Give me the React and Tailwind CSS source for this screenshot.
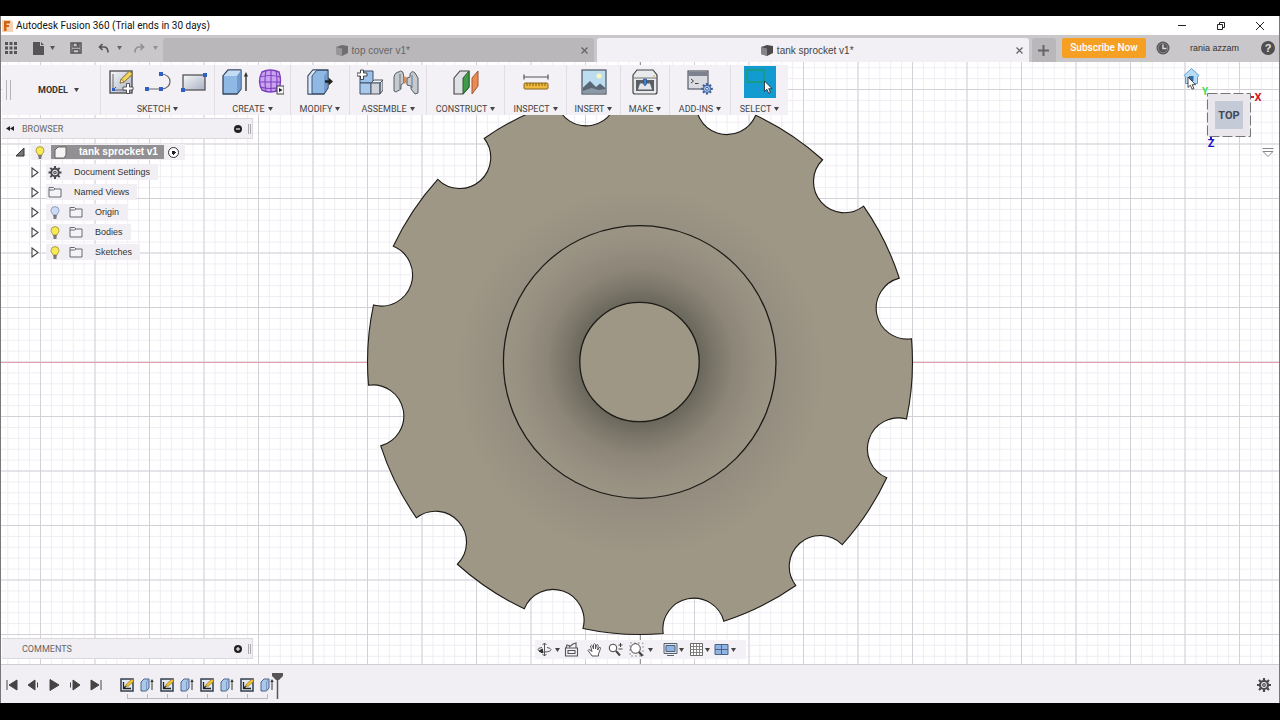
import React, { useState } from 'react'

const TOOTH_COUNT = 12
const OUTER_R = 272.5
const NOTCH_R = 31
const NOTCH_HALF = 6.52

// Outline of the sprocket: outer arcs joined by round notches that cut inwards
function sprocketPath(cx, cy) {
  const point = deg => {
    const a = (deg * Math.PI) / 180
    return `${(cx + OUTER_R * Math.cos(a)).toFixed(2)} ${(cy + OUTER_R * Math.sin(a)).toFixed(2)}`
  }
  let d = ''
  for (let i = 0; i < TOOTH_COUNT; i++) {
    const mid = 18.6 + i * 30
    d += `${i === 0 ? 'M' : `A${OUTER_R} ${OUTER_R} 0 0 1 `}${point(mid - NOTCH_HALF)}`
    d += `A${NOTCH_R} ${NOTCH_R} 0 0 0 ${point(mid + NOTCH_HALF)}`
  }
  return `${d}A${OUTER_R} ${OUTER_R} 0 0 1 ${point(18.6 - NOTCH_HALF)}Z`
}

function Caret({ className = 'text-[#444]' }) {
  return (
    <svg className={`w-[5px] h-1 shrink-0 ${className}`} viewBox="0 0 5 4" fill="currentColor">
      <path d="M0 0h5L2.5 4z" />
    </svg>
  )
}

function Pointer({ x, y }) {
  return (
    <path
      transform={`translate(${x} ${y})`}
      d="M0 0v10.5l2.4-2.2 1.7 3.9 1.8-.8-1.7-3.7h3.3z"
      fill="#fff"
      stroke="#222"
      strokeWidth=".8"
    />
  )
}

function Icon({ children, className = 'w-[26px] h-[26px]', box = 26 }) {
  return (
    <svg className={`shrink-0 ${className}`} viewBox={`0 0 ${box} ${box}`} fill="none">
      {children}
    </svg>
  )
}

const CreateSketchIcon = () => (
  <Icon>
    <rect x="1" y="2" width="22" height="22" fill="url(#steel)" stroke="#555" strokeWidth="1.4" />
    <path d="M4 5v16h14" stroke="#666" />
    <path d="M4 21l3-3" stroke="#444" />
    <rect x="3" y="19" width="3" height="3" fill="#2f5fc4" />
    <path d="M11 14l1.3-4L20.5 2l3.2 3-8.5 8z" fill="#f4d35a" stroke="#6b5a1c" strokeWidth=".9" />
    <path d="M11 14l1.3-4 2.9 3z" fill="#fbe9c4" stroke="#6b5a1c" strokeWidth=".6" />
    <path d="M17.5 14.5h3V18H24v3h-3.5v3.5h-3V21H14v-3h3.5z" fill="#fff" stroke="#444" strokeWidth=".9" />
  </Icon>
)

const LineIcon = () => (
  <Icon>
    <path d="M2 20h14M16 5c12 0 12 15 0 15" stroke="#666" strokeWidth="1.2" />
    <rect x="0" y="18" width="4" height="4" fill="#2f5fc4" />
    <rect x="14" y="18" width="4" height="4" fill="#2f5fc4" />
    <rect x="14" y="3" width="4" height="4" fill="#2f5fc4" />
  </Icon>
)

const RectIcon = () => (
  <Icon>
    <rect x="2" y="6" width="22" height="15" fill="url(#steel)" stroke="#555" strokeWidth="1.3" />
    <rect x="0" y="19" width="4" height="4" fill="#2f5fc4" />
    <rect x="22" y="4" width="4" height="4" fill="#2f5fc4" />
  </Icon>
)

const ExtrudeIcon = ({ className }) => (
  <Icon className={className}>
    <path d="M1 7l5-6h13v19l-4 5H1z" fill="#8fb8e4" stroke="#34465f" strokeWidth="1.3" strokeLinejoin="round" />
    <path d="M1.5 7l5-5.5H19L15 7z" fill="#c4dcf4" />
    <path d="M15 7l3.8-5v18L15 24.5z" fill="#6f9ccd" />
    <path d="M24 22V6" stroke="#333" strokeWidth="1.4" />
    <path d="M21.8 7.5L24 3l2 4.5z" fill="#333" />
  </Icon>
)

const FormIcon = () => (
  <Icon>
    <path d="M4 3q8-4 17 0 3 8 0 18-9 4-17 0Q-1 12 4 3z" fill="#c9a2f0" stroke="#7d3fc0" strokeWidth="1.4" />
    <path d="M2 8q10-3 20 0M1 13h22M2 18q10 3 20 0M8 1.5q-2 10 0 21M13 1v22M18 1.5q2 10 0 21" stroke="#7d3fc0" strokeWidth="1.1" />
    <rect x="19" y="17" width="7" height="8" fill="#f3f3f3" stroke="#444" />
    <path d="M21 19l3.5 2-3.5 2z" fill="#222" />
  </Icon>
)

const PressPullIcon = () => (
  <Icon>
    <path d="M1 7l5-6h15v18l-4 6H1z" fill="#8fb8e4" stroke="#34465f" strokeWidth="1.3" strokeLinejoin="round" />
    <path d="M1.5 7L6 1.5h3.5L5 7v17.5H1.5z" fill="#dbe7f4" />
    <path d="M5 25V7l4.500-5.500" stroke="#34465f" strokeWidth=".9" />
    <path d="M17 7l3.500-5v17L17 24z" fill="#6f9ccd" />
    <path d="M18 12.500h4" stroke="#222" strokeWidth="2.500" />
    <path d="M21.500 8.500L26 12.500l-4.500 4z" fill="#222" />
  </Icon>
)

const ComponentIcon = () => (
  <Icon>
    <path d="M3 4l3-2h10v12H3z" fill="#9cc1ea" stroke="#3f506a" />
    <path d="M3 14h11v11H3z" fill="#a9c9ec" stroke="#3f506a" />
    <path d="M14 14l3-3h9l-3 3z" fill="#f4f5f7" stroke="#4d5560" />
    <path d="M14 14h9v11h-9zM23 14l3-3v10l-3 4z" fill="#cfd4dc" stroke="#4d5560" />
    <path d="M3.500 1h3v3H10v3H6.500v3.500h-3V7H0V4h3.500z" fill="#fff" stroke="#333" strokeWidth=".9" />
  </Icon>
)

const JointIcon = () => (
  <Icon>
    <path d="M1 8q1-5 5-5l1.500-1q3 0 3 4v8L8 16v4l-5 3-2-1z" fill="#c5cad1" stroke="#555d67" />
    <path d="M7 5v15" stroke="#555d67" strokeWidth=".8" />
    <path d="M10.500 7l3 1v6l-3 1z" fill="#e58a4a" />
    <path d="M14 9l3-1V5q2-4 5-1l3 5v15l-3 1-4-5v-3l-4-1z" fill="#c5cad1" stroke="#555d67" />
    <path d="M19 6v13" stroke="#555d67" strokeWidth=".8" />
  </Icon>
)

const PlaneIcon = () => (
  <Icon>
    <path d="M1 9l6-7h9v16l-6 7H1z" fill="#dfe1e4" stroke="#444" strokeWidth="1.100" />
    <path d="M10 9l6-7v16l-6 7z" fill="#3f9b46" stroke="#2d5f31" />
    <path d="M19 9l6-7v15l-6 8z" fill="#ee8a50" stroke="#9a5a34" />
  </Icon>
)

const MeasureIcon = () => (
  <Icon>
    <path d="M1 8h24M1 5.500v5M25 5.500v5" stroke="#555" strokeWidth="1.200" />
    <rect x="1" y="14" width="24" height="6" rx="1" fill="#f0b83c" stroke="#8a681e" />
    <path d="M4 14v3M7 14v3M10 14v3M13 14v3M16 14v3M19 14v3M22 14v3" stroke="#6e5215" strokeWidth=".8" />
  </Icon>
)

const PictureIcon = () => (
  <Icon>
    <rect x="1" y="1" width="24" height="24" fill="#bcdcf0" stroke="#4d5560" strokeWidth="1.200" />
    <circle cx="18" cy="7" r="2.500" fill="#fdf6b8" />
    <path d="M1.600 19L9 12l6 6 4-3.500 5.400 4.500v5.400H1.600z" fill="#5b6675" />
    <path d="M1.600 22l9-3 7 2 6.800-1v4.400H1.600z" fill="#8d98a6" />
  </Icon>
)

const PrinterIcon = () => (
  <Icon>
    <path d="M1 6l4-5h16l4 5v17q0 2-2 2H3q-2 0-2-2z" fill="#e9eaec" stroke="#444" strokeWidth="1.200" />
    <path d="M1 9h24" stroke="#777" />
    <circle cx="22" cy="7" r=".8" fill="#e2a63a" />
    <rect x="4" y="11" width="18" height="11" fill="#5a5f66" />
    <path d="M6 20.500l2-6h10l2 6z" fill="#e3e7ec" />
    <path d="M11.500 10h3v5L13 17l-1.500-2z" fill="#3f7fd0" stroke="#1f4b86" strokeWidth=".6" />
  </Icon>
)

const AddInsIcon = () => (
  <Icon>
    <rect x="1" y="2" width="20" height="18" fill="#d9dbe0" stroke="#555c66" strokeWidth="1.200" />
    <path d="M1 3h20v4H1z" fill="#7b828d" />
    <path d="M4 10l2.500 2L4 14M8 14.500h3.500" stroke="#444" />
    <g stroke="#40639c">
      <path d="M20 14v11.500M14.300 19.800h11.500M16 15.700l8 8M24 15.700l-8 8" strokeWidth="2.200" />
      <circle cx="20" cy="19.800" r="3.600" fill="#a8c2ea" />
      <circle cx="20" cy="19.800" r="1.400" fill="#fff" />
    </g>
  </Icon>
)

const SelectIcon = () => (
  <Icon className="w-8 h-8" box={32}>
    <path d="M0 0h32v32H0z" fill="#119bd0" />
    <rect x="3" y="4" width="17" height="12" stroke="#239a63" strokeWidth="1.300" />
    <Pointer x={20.5} y={15} />
  </Icon>
)

const ribbon = [
  { label: 'SKETCH', width: 'w-[114px]', icons: [CreateSketchIcon, LineIcon, RectIcon] },
  { label: 'CREATE', width: 'w-[76px]', icons: [ExtrudeIcon, FormIcon] },
  { label: 'MODIFY', width: 'w-[59px]', icons: [PressPullIcon] },
  { label: 'ASSEMBLE', width: 'w-[77px]', icons: [ComponentIcon, JointIcon] },
  { label: 'CONSTRUCT', width: 'w-[78px]', icons: [PlaneIcon] },
  { label: 'INSPECT', width: 'w-[62px]', icons: [MeasureIcon] },
  { label: 'INSERT', width: 'w-[54px]', icons: [PictureIcon] },
  { label: 'MAKE', width: 'w-[49px]', icons: [PrinterIcon] },
  { label: 'ADD-INS', width: 'w-[61px]', icons: [AddInsIcon] },
  { label: 'SELECT', width: 'w-[58px]', icons: [SelectIcon] },
]

function GearIcon({ className }) {
  return (
    <svg className={`shrink-0 ${className}`} viewBox="0 0 14 14" fill="none" stroke="#4a4a4d">
      <path d="M7 0v14M0 7h14M2 2l10 10M12 2L2 12" strokeWidth="2.200" />
      <circle cx="7" cy="7" r="4" fill="#f1eff3" strokeWidth="2.200" />
      <circle cx="7" cy="7" r="1.300" strokeWidth="1.200" />
    </svg>
  )
}

function FolderIcon() {
  return (
    <svg className="w-[14px] h-3 shrink-0" viewBox="0 0 14 12" fill="#f4f4f7" stroke="#666a72">
      <path d="M1 11V1.500h4.500L7 3h6v8z" />
      <path d="M1 4h4.500L7 3" />
    </svg>
  )
}

function BulbIcon({ on = true }) {
  return (
    <svg className="w-[10px] h-[13px] shrink-0" viewBox="0 0 10 13">
      <path
        d="M5 .6a4 4 0 0 0-4 4c0 2 1.800 2.800 2 4.400h4c.2-1.600 2-2.400 2-4.400a4 4 0 0 0-4-4z"
        fill={on ? '#f7ea56' : '#ccdcf6'}
        stroke={on ? '#a6973a' : '#8797b8'}
        strokeWidth=".9"
      />
      <path d="M3.300 10h3.400M3.500 12h3" stroke="#555" strokeWidth="1.300" />
    </svg>
  )
}

function ExpandArrow() {
  return (
    <svg className="w-2 h-[11px] shrink-0" viewBox="0 0 8 11" fill="#fff" stroke="#444" strokeWidth="1.100">
      <path d="M1 1l6 4.500L1 10z" />
    </svg>
  )
}

function CubeIcon({ dark, light }) {
  return (
    <svg className="w-[14px] h-[13px] shrink-0" viewBox="0 0 14 13">
      <path d="M1 3l6-2 6 1v7l-6 3-6-2z" fill={dark} />
      <path d="M1 3l6 1.500V12L1 10z" fill={light} />
    </svg>
  )
}

function TitleBar() {
  return (
    <header className="h-[19px] bg-white flex items-center pl-px">
      <svg className="w-3 h-3 shrink-0" viewBox="0 0 12 12">
        <path d="M0 0h9l2 2v10H0z" fill="#f6d3b4" />
        <path d="M2 1h6v2.500H4.500V5H7v2H4.500v4H2z" fill="#cf6414" />
      </svg>
      <h1 className="ml-[2px] text-[10px] leading-4 text-[#111] font-[Roboto,sans-serif]">
        Autodesk Fusion 360 (Trial ends in 30 days)
      </h1>
      <div className="ml-auto flex items-center gap-[29px] pr-[14px] text-[#222]">
        <button aria-label="Minimize">
          <svg className="w-[10px] h-[10px]" viewBox="0 0 10 10" stroke="currentColor"><path d="M1 4.500h8" /></svg>
        </button>
        <button aria-label="Restore">
          <svg className="w-[10px] h-[10px]" viewBox="0 0 10 10" fill="none" stroke="currentColor">
            <path d="M1.500 3.500h5v5h-5zM3.500 3V1.500h5v5H7" />
          </svg>
        </button>
        <button aria-label="Close">
          <svg className="w-[10px] h-[10px]" viewBox="0 0 10 10" stroke="currentColor"><path d="M1 1l8 8M9 1L1 9" /></svg>
        </button>
      </div>
    </header>
  )
}

function DocTab({ name, active, onClick }) {
  return (
    <div className={`flex-1 h-6 flex items-center rounded-t-[3px] pt-px pr-[6px] ${active ? 'bg-[#f2f0f4] text-[#444]' : 'bg-[#b9b7b9] text-[#666]'}`}>
      <button onClick={onClick} className="flex-1 flex items-center justify-center gap-[3px] text-[10px] leading-4">
        {active ? <CubeIcon dark="#4c4a4c" light="#858386" /> : <CubeIcon dark="#6f6d70" light="#989699" />}
        {name}
      </button>
      <button aria-label={`Close ${name}`} className="text-[#666]">
        <svg className="w-[7px] h-[7px]" viewBox="0 0 7 7" stroke="currentColor" strokeWidth="1.300"><path d="M.5.5l6 6M6.500.5l-6 6" /></svg>
      </button>
    </div>
  )
}

function TabBar() {
  const [tab, setTab] = useState(1)
  return (
    <nav className="h-[27px] bg-[#c9c7ca] flex items-end text-[#555]">
      <div className="w-[162px] h-6 shrink-0 flex items-center pl-[4px] pb-1">
        <button aria-label="Data panel">
          <svg className="w-3 h-3" viewBox="0 0 12 12" fill="currentColor">
            <path d="M0 0h3v3H0zM4.500 0h3v3h-3zM9 0h3v3H9zM0 4.500h3v3H0zM4.500 4.500h3v3h-3zM9 4.500h3v3H9zM0 9h3v3H0zM4.500 9h3v3h-3zM9 9h3v3H9z" />
          </svg>
        </button>
        <button aria-label="File" className="ml-4 flex items-center gap-[5px]">
          <svg className="w-3 h-[13px]" viewBox="0 0 12 13" fill="currentColor"><path d="M0 0h7v4h4v9H0zM8 0l3 3H8z" /></svg>
          <Caret className="text-[#555]" />
        </button>
        <button aria-label="Save" className="ml-[15px]">
          <svg className="w-3 h-3" viewBox="0 0 12 12" fill="none" stroke="currentColor" strokeWidth="1.500">
            <path d="M1 1h10v10H1zM3 1v4h6V1M3 11V7.500h6V11" />
            <path d="M6.500 2h1v2" />
          </svg>
        </button>
        <button aria-label="Undo" className="ml-4 flex items-center gap-2">
          <svg className="w-[11px] h-[10px]" viewBox="0 0 11 10" fill="none" stroke="currentColor" strokeWidth="1.700">
            <path d="M2 4h4.500Q10 4.500 10 9.500M4.500 1L1.500 4l3 3" />
          </svg>
          <Caret className="text-[#666]" />
        </button>
        <button aria-label="Redo" className="ml-3 flex items-center gap-2 text-[#929092]">
          <svg className="w-[11px] h-[10px]" viewBox="0 0 11 10" fill="none" stroke="currentColor" strokeWidth="1.700">
            <path d="M9 4H4.500Q1 4.500 1 9.500M6.500 1l3 3-3 3" />
          </svg>
          <Caret className="text-[#929092]" />
        </button>
      </div>
      <div className="flex-1 flex gap-[3px]">
        <DocTab name="top cover v1*" active={tab === 0} onClick={() => setTab(0)} />
        <DocTab name="tank sprocket v1*" active={tab === 1} onClick={() => setTab(1)} />
      </div>
      <button aria-label="New design" className="ml-[3px] w-6 h-6 bg-[#b9b7b9] rounded-t-[3px] flex items-center justify-center text-[#666]">
        <svg className="w-[11px] h-[11px]" viewBox="0 0 11 11" stroke="currentColor" strokeWidth="2"><path d="M5.500 0v11M0 5.500h11" /></svg>
      </button>
      <div className="h-6 flex items-center pl-[6px] pb-1 pr-[4px]">
        <button className="w-[84px] h-5 rounded-[2px] bg-[#f5a023] text-white text-[10px] leading-5 font-medium font-[Roboto,sans-serif]">
          Subscribe Now
        </button>
        <button aria-label="Job status" className="ml-[10px]">
          <svg className="w-[14px] h-[14px]" viewBox="0 0 14 14">
            <circle cx="7" cy="7" r="6.500" fill="#555" />
            <circle cx="7" cy="7" r="4.800" fill="#555" stroke="#aaa" strokeWidth=".6" />
            <path d="M7 3.500V7.500h3.500" fill="none" stroke="#ddd" strokeWidth="1.400" />
          </svg>
        </button>
        <button className="ml-5 text-[9px] leading-4 text-[#333]">rania azzam</button>
        <button aria-label="Help" className="ml-[22px] w-[14px] h-[14px] rounded-full bg-[#4f4f52] text-[#e4e2e5] text-[11px] leading-[14px] font-bold">?</button>
      </div>
    </nav>
  )
}

function Ribbon() {
  return (
    <div className="self-start ml-px h-[50px] flex items-center bg-[#f3f1f5] font-[Roboto,sans-serif] text-[9px] leading-3 text-[#444]">
      <div className="w-[98px] flex items-center">
        <div className="ml-[4px] w-[5px] h-5 border-x border-[#b5b3b8]" />
        <button className="ml-[27px] flex items-center gap-[6px] font-bold text-[#333]">
          MODEL <Caret />
        </button>
      </div>
      {ribbon.map(group => (
        <div key={group.label} className={`${group.width} h-[50px] flex flex-col items-center justify-end border-l border-[#e0dee3]`}>
          <div className="h-8 flex items-center gap-[10px]">
            {group.icons.map((GroupIcon, i) => (
              <button key={i} aria-label={`${group.label} tool ${i + 1}`}><GroupIcon /></button>
            ))}
          </div>
          <button className="mt-[5px] flex items-center gap-[3px] whitespace-nowrap">
            {group.label} <Caret />
          </button>
        </div>
      ))}
    </div>
  )
}

function PanelHeader({ title, collapsible, sign }) {
  return (
    <div className="ml-px w-[251px] h-[21px] flex items-center bg-[#f1eff3] border border-l-0 border-[#dad8dd] font-[Roboto,sans-serif] text-[9px] leading-3 text-[#666]">
      <div className="w-5 pl-1">
        {collapsible && (
          <button aria-label="Collapse panel" className="block">
            <svg className="w-2 h-[5px]" viewBox="0 0 8 5" fill="#222"><path d="M4 0v5L0 2.500zM8 0v5L4 2.500z" /></svg>
          </button>
        )}
      </div>
      <h2>{title}</h2>
      <button aria-label={`Toggle ${title}`} className="ml-auto">
        <svg className="w-2 h-2" viewBox="0 0 8 8">
          <circle cx="4" cy="4" r="4" fill="#222" />
          <path d={sign === 'minus' ? 'M2 4h4' : 'M2 4h4M4 2v4'} stroke="#fff" strokeWidth="1.100" />
        </svg>
      </button>
      <div className="ml-[6px] mr-px w-[3px] h-[10px] border-x border-[#aaa8ad]" />
    </div>
  )
}

const treeItems = [
  { label: 'Document Settings', icon: 'gear' },
  { label: 'Named Views', icon: 'folder' },
  { label: 'Origin', icon: 'folder', bulb: 'off' },
  { label: 'Bodies', icon: 'folder', bulb: 'on' },
  { label: 'Sketches', icon: 'folder', bulb: 'on' },
]

function BrowserTree() {
  return (
    <ul className="mt-[3px] text-[9px] text-[#333]">
      <li className="h-5 flex items-center pl-[14px]">
        <button aria-label="Collapse tank sprocket v1">
          <svg className="w-[10px] h-[10px]" viewBox="0 0 10 10" fill="#777" stroke="#333"><path d="M9 1v8H1z" /></svg>
        </button>
        <div className="ml-[6px] h-4 flex items-center bg-[#f1eff3] px-1">
          <BulbIcon />
          <button className="ml-[6px] h-[14px] flex items-center gap-3 bg-[#929092] px-[3px] text-[10px] leading-[14px] font-bold text-white">
            <svg className="w-[13px] h-[13px] shrink-0" viewBox="0 0 13 13" fill="#f4f4f4" stroke="#666">
              <path d="M1 4l3-3h8v8l-2 3H1z" />
            </svg>
            <span className="pr-[3px]">tank sprocket v1</span>
          </button>
          <label className="ml-1 flex items-center">
            <input
              type="radio"
              aria-label="Activate tank sprocket v1"
              defaultChecked
              className="appearance-none w-[11px] h-[11px] rounded-full border border-[#333] bg-white bg-[radial-gradient(circle,#222_0_2px,transparent_2px)]"
            />
          </label>
          <span className="w-[2px]" />
        </div>
      </li>
      {treeItems.map(item => (
        <li key={item.label} className="h-5 flex items-center pl-[30px]">
          <button aria-label={`Expand ${item.label}`}><ExpandArrow /></button>
          <div className="ml-[7px] h-4 flex items-center bg-[#f1eff3] pl-[2px] pr-2">
            {item.bulb && <span className="w-[21px] pl-[2px]"><BulbIcon on={item.bulb === 'on'} /></span>}
            {item.icon === 'gear' ? <GearIcon className="w-[14px] h-[13px]" /> : <FolderIcon />}
            <span className="ml-3 leading-4">{item.label}</span>
          </div>
        </li>
      ))}
    </ul>
  )
}

function NavBar() {
  const s = 'w-[15px] h-[15px]'
  return (
    <div className="h-[19px] flex items-center bg-[#f3f1f5] px-[2px] gap-[2px]">
      <button aria-label="Orbit" className="flex items-center gap-[3px]">
        <svg className={s} viewBox="0 0 15 15" fill="none" stroke="#555">
          <path d="M7.500 1v13M5.500 3l2-2 2 2M5.500 12l2 2 2-2" />
          <path d="M5 5.500Q1 6 1 7.500 1.500 10 7.500 10t6.500-2.500Q13.500 6 10 5.500" />
          <path d="M2 9l3.500-2v4z" fill="#333" stroke="#333" />
        </svg>
        <Caret />
      </button>
      <button aria-label="Look at" className="ml-[2px]">
        <svg className={s} viewBox="0 0 15 15" fill="none" stroke="#555" strokeWidth="1.100">
          <path d="M1.500 6h12v8h-12zM4 8.500h7v3H4zM2 6l1-3 3 1M5 5l4-3 3-1v5" />
        </svg>
      </button>
      <button aria-label="Pan" className="ml-[6px]">
        <svg className={s} viewBox="0 0 15 15" fill="#fff" stroke="#555">
          <path d="M5 14Q3 11 1 8.500q.5-1.500 2-.5l2 1.500L3.500 4Q4.500 2.500 5.500 4l1 3V2.500Q7.500 1 8.500 2.500V7l1-4q1.500-1 1.700.5L10.700 8l1.500-2.500q1.500-.5 1.300 1L11.500 12v2z" />
        </svg>
      </button>
      <button aria-label="Zoom" className="ml-1">
        <svg className={s} viewBox="0 0 15 15" fill="#fff" stroke="#444">
          <circle cx="5" cy="6" r="3.800" />
          <path d="M8 9l4 4.500" strokeWidth="2" />
          <path d="M12.500 1v4M10.500 3h4M10.500 7h4" />
        </svg>
      </button>
      <button aria-label="Fit" className="ml-1 flex items-center gap-1">
        <svg className={s} viewBox="0 0 15 15" fill="#fff" stroke="#444">
          <path d="M1 1h13v13H1z" fill="none" strokeDasharray="2 2" stroke="#999" />
          <circle cx="6.500" cy="6.500" r="4.800" />
          <path d="M10 10l3.500 4" strokeWidth="2.200" />
        </svg>
        <Caret />
      </button>
      <button aria-label="Display settings" className="ml-2 flex items-center gap-px">
        <svg className={s} viewBox="0 0 15 15" fill="#dde3ee" stroke="#56606f">
          <path d="M1 1.500h13v10H1zM4 13.500h7" />
          <path d="M3 3.500h9v6H3z" fill="#8db4e6" />
        </svg>
        <Caret />
      </button>
      <button aria-label="Grid settings" className="ml-[3px] flex items-center gap-px">
        <svg className={s} viewBox="0 0 15 15" fill="#fff" stroke="#777" strokeWidth=".9">
          <path d="M1.500 1.500h12v12h-12z" stroke="#555" />
          <path d="M4.500 1v13M7.500 1v13M10.500 1v13M1 4.500h13M1 7.500h13M1 10.500h13" />
        </svg>
        <Caret />
      </button>
      <button aria-label="Viewports" className="ml-[2px] flex items-center gap-[2px]">
        <svg className={s} viewBox="0 0 15 15" fill="#8fb4e4" stroke="#4c6384">
          <path d="M1 2.500h13v10H1zM7.500 2.500v10M1 7.500h13" />
        </svg>
        <Caret />
      </button>
      <span className="w-[6px]" />
    </div>
  )
}

function ModelCanvas() {
  return (
    <svg className="absolute inset-0 w-full h-full" viewBox="0 62 1280 602" preserveAspectRatio="xMidYMid slice">
      <defs>
        <linearGradient id="steel" x1="0" y1="0" x2="1" y2="1">
          <stop offset="0" stopColor="#f6f7fa" />
          <stop offset="1" stopColor="#aab1c2" />
        </linearGradient>
        <pattern id="minor" x="40" y="34.500" width="10.900" height="10.900" patternUnits="userSpaceOnUse">
          <path d="M0 .5h10.900M.5 0v10.900" stroke="#efedf3" fill="none" />
        </pattern>
        <pattern id="major" x="40" y="34.500" width="54.500" height="54.500" patternUnits="userSpaceOnUse">
          <path d="M0 .5h54.500M.5 0v54.500" stroke="#d3d1d7" fill="none" />
        </pattern>
        <radialGradient id="hub" cx="640" cy="362" r="137" gradientUnits="userSpaceOnUse">
          <stop offset=".43" stopColor="#69665b" />
          <stop offset=".54" stopColor="#797568" />
          <stop offset=".68" stopColor="#8c8578" />
          <stop offset=".84" stopColor="#968e80" />
          <stop offset="1" stopColor="#9c9585" />
        </radialGradient>
        <radialGradient id="plate" cx="640" cy="372" r="185" gradientUnits="userSpaceOnUse">
          <stop offset=".7" stopColor="#948c7f" />
          <stop offset="1" stopColor="#9e9786" />
        </radialGradient>
      </defs>
      <path d="M0 62h1280v602H0z" fill="#fff" />
      <path d="M0 62h1280v602H0z" fill="url(#minor)" />
      <path d="M0 62h1280v602H0z" fill="url(#major)" />
      <path d="M640.500 62v602" stroke="#99979c" />
      <path d="M0 362.500h1280" stroke="#e3a0aa" />
      <path d={sprocketPath(640, 362)} fill="url(#plate)" stroke="#1d1b17" strokeWidth="1.100" />
      <circle cx="639.700" cy="362" r="136.300" fill="url(#hub)" stroke="#1d1b17" strokeWidth="1.300" />
      <circle cx="639.500" cy="362" r="59.700" fill="#9e9786" stroke="#1d1b17" strokeWidth="1.300" />
    </svg>
  )
}

// View orientation widget that floats in the canvas corner
function ViewCube() {
  return (
    <div className="absolute top-0 right-0 w-24 h-24">
      <svg className="w-24 h-24" viewBox="0 0 96 96" fill="none">
        <path d="M1 13.500L8.500 6.500l7.500 7-1.500 1.500v6.500h-12V15z" fill="#b9dcf5" stroke="#5f9fd0" />
        <path d="M6 14h4.500v5H6z" fill="#2f6ea8" />
        <Pointer x={5} y={15} />
        <rect x="24.500" y="31.500" width="43" height="43" fill="#e9e7eb" stroke="#77757a" strokeDasharray="10 3" />
        <rect x="32" y="39" width="28" height="28" fill="#c4cad6" />
        <path d="M68 35h3" stroke="#d11a2c" strokeWidth="2" />
        <path d="M28 75v3" stroke="#1b12c9" strokeWidth="2" />
        <g className="font-[Roboto,sans-serif] font-bold" textAnchor="middle" fontSize="11">
          <text x="46" y="57" fill="#3f4856">TOP</text>
          <text x="75" y="39" fill="#d11a2c">X</text>
          <text x="22" y="33" fontSize="10" fill="#3fe04a">Y</text>
          <text x="28" y="85" fill="#1b12c9">Z</text>
        </g>
        <path d="M79.500 86.500h11M80 89.500h10l-5 5z" fill="#fff" stroke="#88868b" />
      </svg>
    </div>
  )
}

const playback = [
  { label: 'Go to start', d: 'M1 1v10M11 1v10L3 6z' },
  { label: 'Step back', d: 'M8 1v10L1 6zM10.500 3.500v5' },
  { label: 'Play', d: 'M2 0.500v11l9-5.500z' },
  { label: 'Step forward', d: 'M4 1v10l7-5zM1.500 3.500v5' },
  { label: 'Go to end', d: 'M11 1v10M1 1v10l8-5z' },
]

function SketchFeature() {
  return (
    <svg className="w-[14px] h-[14px]" viewBox="0 0 14 14" fill="none">
      <path d="M1 1h12v12H1z" fill="#e3e9f2" stroke="#333f4f" strokeWidth="1.500" />
      <path d="M3.500 4v6.500H11M3.500 10.500L6 8" stroke="#222" strokeWidth="1.300" />
      <path d="M5.500 8.500l1-2.500L12 1l2 2-5.500 5z" fill="#f2c52e" stroke="#7d6518" strokeWidth=".6" />
    </svg>
  )
}

function ExtrudeFeature() {
  return (
    <svg className="w-[14px] h-[14px]" viewBox="0 0 14 14" fill="none">
      <path d="M1 4l3-3h5v9l-2.500 3H1z" fill="#a9c8ec" stroke="#4c6384" strokeLinejoin="round" />
      <path d="M6.500 4v8.500M6.500 4L9 1.500" stroke="#6a8ab8" strokeWidth=".8" />
      <path d="M12 12V3" stroke="#333" />
      <path d="M10.300 4L12 1l1.700 3z" fill="#333" />
    </svg>
  )
}

function Timeline() {
  return (
    <footer className="h-[39px] bg-[#f1eff3] border-t border-[#cfcdd2] flex items-start pl-[5px] pr-2">
      <div className="h-10 flex items-center gap-[9px]">
        {playback.map(p => (
          <button key={p.label} aria-label={p.label}>
            <svg className="w-3 h-3" viewBox="0 0 12 12" fill="#444" stroke="#444"><path d={p.d} /></svg>
          </button>
        ))}
      </div>
      <div className="ml-[15px] mt-[11px]">
        <div className="flex h-[18px] items-center">
          {[0, 1, 2, 3, 4, 5, 6, 7].map(i => (
            <button key={i} aria-label={`Feature ${i + 1}`} className="w-5 flex justify-center">
              {i % 2 === 0 ? <SketchFeature /> : <ExtrudeFeature />}
            </button>
          ))}
        </div>
        <div className="ml-[10px] flex w-[141px] border-r border-[#bbb9be]">
          {[0, 1, 2, 3, 4, 5, 6].map(i => (
            <span key={i} className="w-5 h-[5px] border-l border-b border-[#bbb9be]" />
          ))}
        </div>
      </div>
      <svg className="-ml-[5px] mt-2 w-[11px] h-[26px] shrink-0" viewBox="0 0 11 26">
        <path d="M0 0h11v3L7 7H4L0 3z" fill="#555" />
        <path d="M5.500 5v21" stroke="#555" strokeWidth="1.500" />
      </svg>
      <button aria-label="Timeline settings" className="ml-auto mt-[13px]">
        <GearIcon className="w-[14px] h-[14px]" />
      </button>
    </footer>
  )
}

export default function App() {
  return (
    <div className="min-h-screen bg-black pt-4 pb-[17px] flex flex-col font-['Liberation_Sans',Arial,sans-serif]">
      <div className="flex-1 flex flex-col border-x border-[#777]">
        <TitleBar />
        <TabBar />
        <main className="relative flex-1 flex flex-col">
          <ModelCanvas />
          <ViewCube />
          <div className="relative flex-1 flex flex-col items-start pt-[3px] pb-[5px]">
            <Ribbon />
            <div className="mt-[3px]">
              <PanelHeader title="BROWSER" collapsible sign="minus" />
              <BrowserTree />
            </div>
            <div className="mt-auto w-full grid grid-cols-[1fr_auto_1fr] items-end">
              <PanelHeader title="COMMENTS" sign="plus" />
              <NavBar />
            </div>
          </div>
        </main>
        <Timeline />
      </div>
    </div>
  )
}
